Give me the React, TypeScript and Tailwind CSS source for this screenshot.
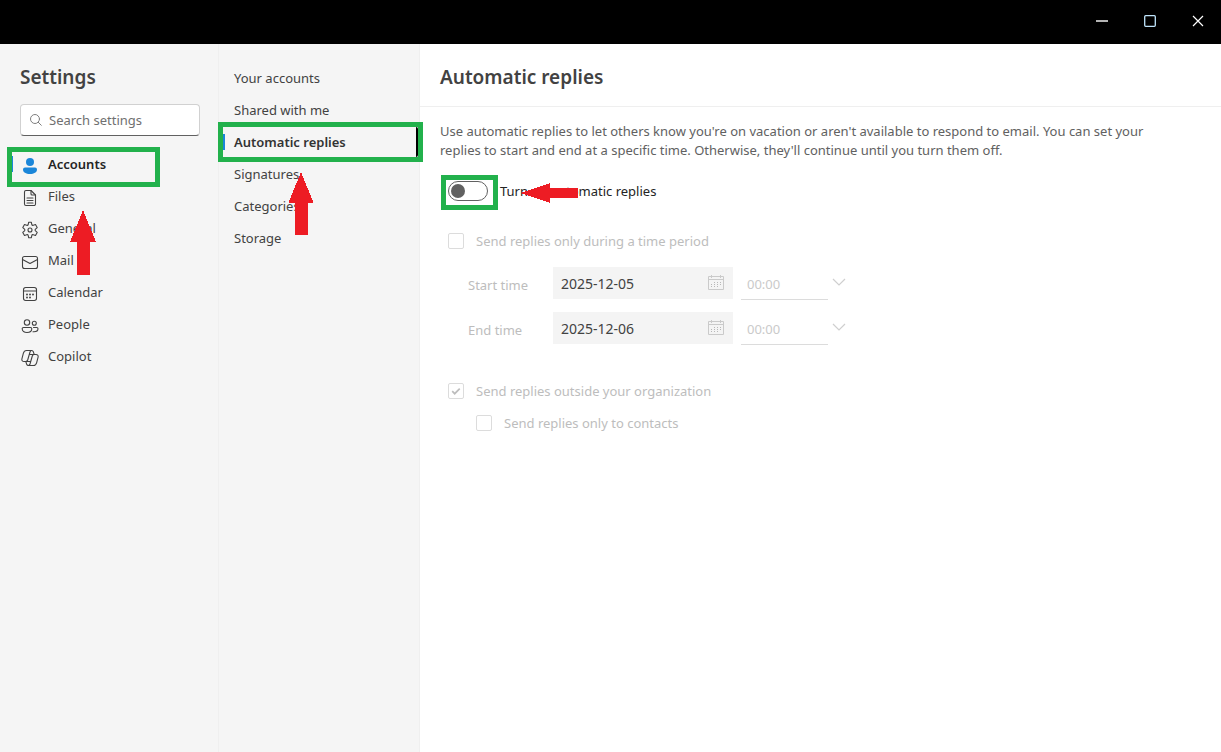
import { useState, type ReactNode } from "react";

const FONT = "font-['Noto_Sans','Open_Sans',sans-serif]";

function Icon({ children }: { children: ReactNode }) {
  return (
    <svg viewBox="0 0 20 20" className="h-5 w-5 shrink-0" fill="none" stroke="#424242" strokeWidth="1.1" strokeLinecap="round" strokeLinejoin="round" aria-hidden="true">
      {children}
    </svg>
  );
}

function UpArrow({ className }: { className: string }) {
  return (
    <svg viewBox="0 0 26 65" className={className} fill="#ed1c24" aria-hidden="true" shapeRendering="crispEdges">
      <path d="M13 0 26 32H20V65H7V32H0Z" />
    </svg>
  );
}

const sections: { name: string; icon: ReactNode }[] = [
  {
    name: "Accounts",
    icon: (
      <g fill="#1a86d9" stroke="none">
        <circle cx="10" cy="6" r="4" />
        <path d="M5 11.5h10a2 2 0 0 1 2 2c0 2.800-3 4.500-7 4.500s-7-1.700-7-4.500a2 2 0 0 1 2-2Z" />
      </g>
    ),
  },
  {
    name: "Files",
    icon: (
      <>
        <path d="M4.500 4A1.500 1.500 0 0 1 6 2.500h5L15.500 7v9A1.500 1.500 0 0 1 14 17.500H6A1.500 1.500 0 0 1 4.500 16Z" />
        <path d="M11 2.500V6a1 1 0 0 0 1 1h3.500M7 10h6M7 12.500h6M7 15h6" />
      </>
    ),
  },
  {
    name: "General",
    icon: (
      <>
        <circle cx="10" cy="10" r="2" />
        <path d="M8.700 2.200h2.600l.5 2.300c.2.700.8 1 1.500.8l2.200-.7 1.700 3-1.700 1.500c-.5.500-.5 1.300 0 1.800l1.700 1.500-1.700 3-2.200-.7c-.7-.2-1.300.1-1.500.8l-.5 2.300H8.700l-.5-2.300c-.2-.7-.8-1-1.500-.8l-2.200.7-1.700-3 1.700-1.500c.5-.5.5-1.300 0-1.800L2.800 7.600l1.700-3 2.200.7c.7.2 1.300-.1 1.500-.8Z" />
      </>
    ),
  },
  {
    name: "Mail",
    icon: (
      <>
        <rect x="2.500" y="4.500" width="15" height="12" rx="2" />
        <path d="m2.500 7.500 7.500 4 7.500-4" />
      </>
    ),
  },
  {
    name: "Calendar",
    icon: (
      <>
        <rect x="3.500" y="3.500" width="13" height="13" rx="2.200" />
        <path d="M3.500 7h13" />
        <g fill="#424242" stroke="none">
          <circle cx="7" cy="10.500" r=".95" />
          <circle cx="10" cy="10.500" r=".95" />
          <circle cx="13" cy="10.500" r=".95" />
          <circle cx="7" cy="13.500" r=".95" />
          <circle cx="10" cy="13.500" r=".95" />
        </g>
      </>
    ),
  },
  {
    name: "People",
    icon: (
      <>
        <circle cx="7" cy="6.500" r="2.700" />
        <circle cx="14.300" cy="7.300" r="2" />
        <path d="M3.500 11.500h7a1.300 1.300 0 0 1 1.300 1.300c0 2.300-2 3.700-4.800 3.700s-4.800-1.400-4.800-3.700a1.300 1.300 0 0 1 1.300-1.300ZM13.500 11.500h3.200a1.300 1.300 0 0 1 1.300 1.300c0 2-1.700 3-4 3l-1-.1" />
      </>
    ),
  },
  {
    name: "Copilot",
    icon: (
      <>
        <path d="M6.500 2.500h5.200c.8 0 1.300.4 1.600 1.200l.9 2.800h1.800c1.600 0 2.500 1.200 2.100 2.700l-1.500 5.600c-.5 1.700-1.500 2.700-3.100 2.700H8.300c-.8 0-1.300-.4-1.600-1.200l-.9-2.800H4c-1.600 0-2.500-1.200-2.100-2.700l1.500-5.600c.5-1.700 1.500-2.700 3.100-2.700Z" />
        <path d="M11.700 2.500c-.9 0-1.400.6-1.700 1.500L7.700 12c-.3 1-.9 1.500-1.900 1.500M8.300 17.500c.9 0 1.400-.6 1.700-1.500l2.300-8c.3-1 .9-1.500 1.900-1.500H9.300M10.700 13.500H5.800" />
      </>
    ),
  },
];

const pages = ["Your accounts", "Shared with me", "Automatic replies", "Signatures", "Categories", "Storage"];

function TitleBar() {
  return (
    <header className="flex h-11 shrink-0 justify-end bg-black text-white">
      <button aria-label="Minimize" className="flex w-12 items-center justify-center pb-0.5 pl-0.5">
        <svg className="h-3 w-3" viewBox="0 0 12 12" fill="none" stroke="#b4b4b4" strokeWidth="2"><path d="M0 6h12" /></svg>
      </button>
      <button aria-label="Maximize" className="flex w-12 items-center justify-center pb-0.5 pl-0.5">
        <svg className="h-3 w-3" viewBox="0 0 12 12" fill="none" stroke="#bfe4fb" strokeWidth="1.300"><rect x=".7" y=".7" width="10.600" height="10.600" rx="1" /></svg>
      </button>
      <button aria-label="Close" className="flex w-12 items-center justify-center pb-0.5 pl-0.5">
        <svg className="h-3 w-3" viewBox="0 0 12 12" fill="none" stroke="currentColor" strokeWidth="1.200"><path d="m1 1 10 10M11 1 1 11" /></svg>
      </button>
    </header>
  );
}

function Check({ id, label, checked, className = "" }: { id: string; label: string; checked?: boolean; className?: string }) {
  return (
    <div className={`flex h-8 items-center gap-3 ${className}`}>
      <span className="relative flex h-4 w-4">
        <input id={id} type="checkbox" disabled defaultChecked={checked} className="peer h-4 w-4 appearance-none rounded-xs border border-[#dcdcdc] bg-white" />
        <svg viewBox="0 0 16 16" className="pointer-events-none absolute inset-0 hidden h-4 w-4 peer-checked:block" fill="none" stroke="#bdbdbd" strokeWidth="1.700"><path d="m4.200 8.200 2.500 2.500 5-5" /></svg>
      </span>
      <label htmlFor={id} className="text-[#bdbdbd]">{label}</label>
    </div>
  );
}

function TimeRow({ id, label, date }: { id: string; label: string; date: string }) {
  return (
    <div className="flex h-8 items-center">
      <label htmlFor={id} className="w-[85px] pt-1 text-[#bdbdbd]">{label}</label>
      <div className="flex h-8 w-[180px] items-center bg-[#f4f4f4] px-2">
        <input id={id} disabled defaultValue={date} className="h-8 w-full min-w-0 bg-transparent text-[14px] text-[#424242]" />
        <svg viewBox="0 0 18 18" className="h-[18px] w-[18px] shrink-0" fill="none" stroke="#cacaca" aria-hidden="true">
          <path d="M1.500 2.500h15v13h-15ZM1.500 5.500h15M4.500 1v3M13.500 1v3" />
          <path strokeDasharray="1 2" d="M7 8.500h8M4 10.500h11M4 12.500h8" stroke="#b8b8b8" shapeRendering="crispEdges" />
        </svg>
      </div>
      <div className="ml-2 flex items-center">
        <select aria-label={`${label} hour`} disabled className="h-[34px] w-[87px] appearance-none border-b border-[#dcdcdc] px-1.5 pt-0.5 text-[#cacaca] opacity-100">
          <option>00:00</option>
        </select>
        <svg viewBox="0 0 14 8" className="mb-0.5 ml-1 h-2 w-3.5" fill="none" stroke="#cfcfcf" strokeWidth="1.200" aria-hidden="true"><path d="m1 1 6 6 6-6" /></svg>
      </div>
    </div>
  );
}

export default function App() {
  const [on, setOn] = useState(false);
  return (
    <div className={`${FONT} flex min-h-screen flex-col bg-white text-[13px] leading-5 text-[#424242]`}>
      <TitleBar />
      <div className="flex flex-1">
        <aside className="w-[218px] shrink-0 bg-[#f5f5f5] pt-[18px]">
          <h1 className="px-5 pt-px text-[19px] font-semibold leading-7">Settings</h1>
          <div className="mx-5 mt-[13px] mr-[18px] flex h-8 items-center gap-1.5 rounded border border-[#d1d1d1] border-b-[#616161] bg-white px-2">
            <svg viewBox="0 0 14 14" className="h-3.5 w-3.5 shrink-0" fill="none" stroke="#808080" strokeLinecap="round" aria-hidden="true">
              <circle cx="6" cy="6" r="4.500" /><path d="m9.300 9.300 3 3" />
            </svg>
            <input type="search" aria-label="Search settings" placeholder="Search settings" className="w-full min-w-0 bg-transparent outline-none placeholder:text-[#707070]" />
          </div>
          <nav aria-label="Settings sections" className="relative mt-3">
            {sections.map(({ name, icon }, i) => (
              <a key={name} href={`#${name.toLowerCase()}`} className={`relative flex h-8 items-center gap-2 px-5 ${i === 0 ? "font-semibold text-[#242424]" : ""}`}>
                {i === 0 && <span className="absolute top-2 left-2.5 h-4 w-[3px] bg-[#1a86d9]" />}
                <span className="pt-1"><Icon>{icon}</Icon></span>
                <span>{name}</span>
              </a>
            ))}
            <span className="pointer-events-none absolute -top-px left-[7px] h-10 w-[153px] border-5 border-[#22b14c]" />
            <UpArrow className="pointer-events-none absolute top-[62px] left-[70px] h-[65px] w-[26px]" />
          </nav>
        </aside>
        <nav aria-label="Accounts pages" className="relative w-[202px] shrink-0 border-x border-[#efefef] bg-[#f5f5f5] pt-[18px]">
          {pages.map((name) => {
            const active = name === "Automatic replies";
            return (
              <a key={name} href={`#${name.toLowerCase().replaceAll(" ", "-")}`} className={`relative flex h-8 items-center px-[15px] ${active ? "font-semibold text-[#333333]" : ""}`}>
                {active && <span className="absolute top-2 left-1 h-4 w-0.5 bg-[#1a86d9]" />}
                {active && <span className="absolute right-px top-px h-[30px] w-1 rounded-xs border-r-2 border-black" />}
                {name}
              </a>
            );
          })}
          <span className="pointer-events-none absolute top-[78px] -left-px z-10 h-10 w-[205px] border-5 border-[#22b14c]" />
          <UpArrow className="pointer-events-none absolute top-32 left-[69px] h-[63px] w-[26px]" />
        </nav>
        <main className="min-w-0 flex-1">
          <h2 className="h-[63px] border-b border-[#efefef] px-5 pt-[19px] text-[19px] font-semibold leading-7">Automatic replies</h2>
          <div className="px-5 pt-[15px]">
            <p className="max-w-[740px] leading-[19px] text-[#616161]">
              Use automatic replies to let others know you're on vacation or aren't available to respond to email. You can set your replies to start and end at a specific time. Otherwise, they'll continue until you turn them off.
            </p>
            <div className="relative mt-[15px] flex h-[35px] items-center gap-3 pb-1 pl-2">
              <button id="auto-replies" role="switch" aria-checked={on} onClick={() => setOn(!on)} className="flex h-5 w-10 items-center rounded-full border border-[#616161] px-0.5">
                <span className={`h-3.5 w-3.5 rounded-full bg-[#616161] ${on ? "ml-auto" : ""}`} />
              </button>
              <label htmlFor="auto-replies" className="text-[#242424]">Turn on automatic replies</label>
              <span className="pointer-events-none absolute top-0 left-px h-[35px] w-[57px] border-5 border-[#22b14c]" />
              <svg viewBox="0 0 57 20" className="pointer-events-none absolute top-2 left-[81px] h-5 w-[57px]" fill="#ed1c24" shapeRendering="crispEdges" aria-hidden="true">
                <path d="M0 10 29 0V5H57V15H29V20Z" />
              </svg>
            </div>
            <Check id="period" label="Send replies only during a time period" className="mt-[15px] pl-2" />
            <div className="mt-2.5 flex flex-col gap-[13px] pl-7">
              <TimeRow id="start" label="Start time" date="2025-12-05" />
              <TimeRow id="end" label="End time" date="2025-12-06" />
            </div>
            <Check id="outside" label="Send replies outside your organization" checked className="mt-[31px] pl-2" />
            <Check id="contacts" label="Send replies only to contacts" className="pl-9" />
          </div>
        </main>
      </div>
    </div>
  );
}
